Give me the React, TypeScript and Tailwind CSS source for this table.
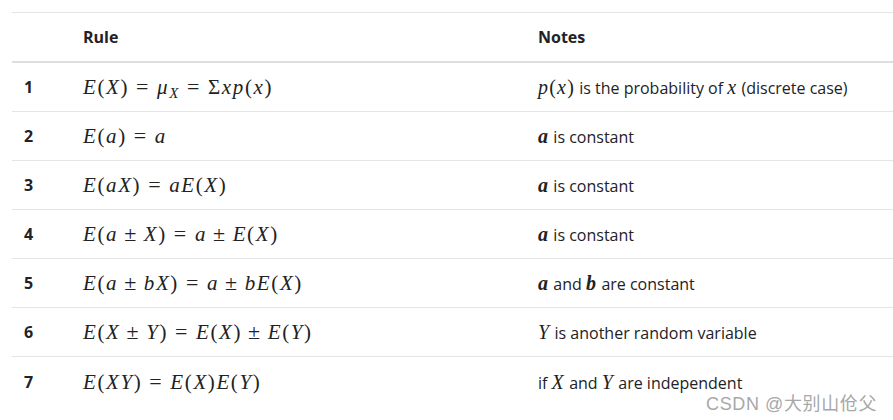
import React from "react";

const mathCls = "font-['Liberation_Serif',serif] text-[20px] tracking-[1.2px] text-[#222]";
const ruleCls = "font-['Liberation_Serif',serif] text-[21px] tracking-[1.6px] text-[#222]";
const I = ({ c }: { c: string }) => <i>{c}</i>;
const R = ({ c }: { c: string }) => <span className="not-italic">{c}</span>;
const Op = ({ c }: { c: string }) => <span className="not-italic mx-[7px] text-[22px]">{c}</span>;
const Pm = ({ c }: { c: string }) => <span className="not-italic mx-[6px] text-[22px]">{c}</span>;

const rows: { n: string; rule: React.ReactNode; note: React.ReactNode }[] = [
  {
    n: "1",
    rule: (
      <>
        <I c="E" /><R c="(" /><I c="X" /><R c=")" /><Op c="=" /><I c="μ" /><sub className="text-[15px] italic">X</sub><Op c="=" /><R c="Σ" /><I c="xp" /><R c="(" /><I c="x" /><R c=")" />
      </>
    ),
    note: (
      <>
        <span className={mathCls}><I c="p" /><R c="(" /><I c="x" /><R c=")" /></span> is the probability of <span className={mathCls}><I c="x" /></span> (discrete case)
      </>
    ),
  },
  {
    n: "2",
    rule: (<><I c="E" /><R c="(" /><I c="a" /><R c=")" /><Op c="=" /><I c="a" /></>),
    note: (<><span className={mathCls + " font-bold"}><I c="a" /></span> is constant</>),
  },
  {
    n: "3",
    rule: (<><I c="E" /><R c="(" /><I c="aX" /><R c=")" /><Op c="=" /><I c="aE" /><R c="(" /><I c="X" /><R c=")" /></>),
    note: (<><span className={mathCls + " font-bold"}><I c="a" /></span> is constant</>),
  },
  {
    n: "4",
    rule: (<><I c="E" /><R c="(" /><I c="a" /><Pm c="±" /><I c="X" /><R c=")" /><Op c="=" /><I c="a" /><Pm c="±" /><I c="E" /><R c="(" /><I c="X" /><R c=")" /></>),
    note: (<><span className={mathCls + " font-bold"}><I c="a" /></span> is constant</>),
  },
  {
    n: "5",
    rule: (<><I c="E" /><R c="(" /><I c="a" /><Pm c="±" /><I c="bX" /><R c=")" /><Op c="=" /><I c="a" /><Pm c="±" /><I c="bE" /><R c="(" /><I c="X" /><R c=")" /></>),
    note: (<><span className={mathCls + " font-bold"}><I c="a" /></span> and <span className={mathCls + " font-bold"}><I c="b" /></span> are constant</>),
  },
  {
    n: "6",
    rule: (<><I c="E" /><R c="(" /><I c="X" /><Pm c="±" /><I c="Y" /><R c=")" /><Op c="=" /><I c="E" /><R c="(" /><I c="X" /><R c=")" /><Pm c="±" /><I c="E" /><R c="(" /><I c="Y" /><R c=")" /></>),
    note: (<><span className={mathCls}><I c="Y" /></span> is another random variable</>),
  },
  {
    n: "7",
    rule: (<><I c="E" /><R c="(" /><I c="XY" /><R c=")" /><Op c="=" /><I c="E" /><R c="(" /><I c="X" /><R c=")" /><I c="E" /><R c="(" /><I c="Y" /><R c=")" /></>),
    note: (<>if <span className={mathCls}><I c="X" /></span> and <span className={mathCls}><I c="Y" /></span> are independent</>),
  },
];

export default function App() {
  return (
    <div className="w-[893px] h-[420px] bg-white pt-[12px] pl-[12px] relative overflow-hidden font-['Open_Sans',sans-serif] text-[16px] text-[#222226]">
      <div className="border-t border-[#e4e5e7]">
        <div className="flex h-[50px] items-center border-b-2 border-[#dcdee1] font-bold">
          <div className="w-[59px] pl-[12px]"></div>
          <div className="w-[455px] pl-[12px]">Rule</div>
          <div className="flex-1 pl-[12px]">Notes</div>
        </div>
        {rows.map((r, i) => (
          <div
            key={r.n}
            className={
              "flex h-[49px] items-center " +
              (i < rows.length - 1 ? "border-b border-[#e4e5e7]" : "")
            }
          >
            <div className="w-[59px] pl-[12px] font-bold">{r.n}</div>
            <div className={"w-[455px] pl-[12px] " + ruleCls}>{r.rule}</div>
            <div className="flex-1 pl-[12px]">{r.note}</div>
          </div>
        ))}
      </div>
      <div className="absolute right-[16px] bottom-[7px] leading-none text-[18px] tracking-[0.6px] text-[#a8a8a8] font-['Liberation_Sans','Noto_Sans_CJK_SC',sans-serif] [text-shadow:0_0_1px_#fff]">
        CSDN @大别山伧父
      </div>
    </div>
  );
}
